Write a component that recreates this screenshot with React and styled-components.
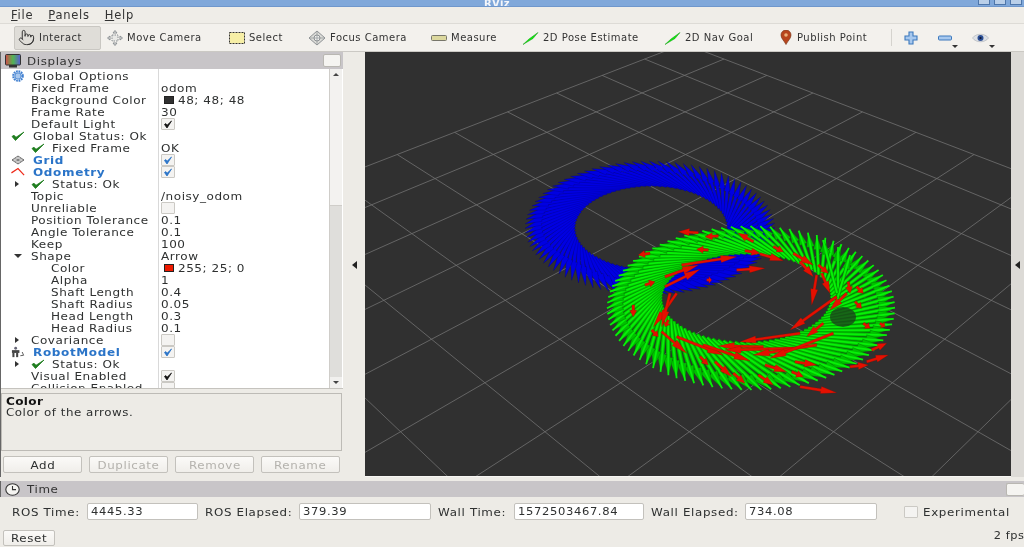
import React from 'react';
import styled, { createGlobalStyle } from 'styled-components';
import { Pointer } from 'lucide-react';

const Global = createGlobalStyle`
  html, body { margin: 0; padding: 0; background: #edebe6; overflow: hidden; }
  * { box-sizing: border-box; }
`;

const Page = styled.div`
  width: 1024px; height: 547px; overflow: hidden; display: flex; flex-direction: column;
  background: #edebe6; color: #2e3030;
  font-family: "DejaVu Sans", sans-serif; font-size: 11px; letter-spacing: .42px;
  filter: blur(.3px);
`;
const Wide = styled.span`
  display: inline-block; white-space: nowrap; transform: scaleX(${p => p.$s ?? 1.13});
  transform-origin: ${p => p.$o ?? 'left'} center;
`;
const TitleBar = styled.div`
  height: 7px; flex: none; display: flex; justify-content: center; align-items: flex-end; overflow: hidden;
  background: #80a8da; border-bottom: 1px solid #6f97cc; position: relative; color: #f4f6fa; padding-right: 30px;
  font-size: 10px; font-weight: bold; line-height: 10px;
`;
const TitleText = styled.span` margin-bottom: -3px; `;
const WinButtons = styled.div`
  position: absolute; right: 2px; top: 0; display: flex; gap: 4px;
`;
const WinButton = styled.div`
  width: 12px; height: 5px; background: #b9cfe9; border: 1px solid #4e76aa; border-top: 0;
`;
const MenuBar = styled.div`
  height: 16px; flex: none; display: flex; align-items: center; gap: 15px; padding-left: 11px;
  background: #efede8; font-size: 11.5px; letter-spacing: .75px; color: #333;
  u { text-underline-offset: 1px; }
`;
const Toolbar = styled.div`
  height: 29px; flex: none; display: flex; align-items: center; padding-left: 5px;
  background: #f3f1ed; border-top: 1px solid #dddbd6; border-bottom: 1px solid #cbc9c4;
`;
const Grip = styled.div`
  width: 4px; height: 17px; margin-right: 5px;
  background-image: radial-gradient(#bdbbb6 .6px, transparent .7px); background-size: 2px 2px;
`;
const ToolButton = styled.div`
  width: ${p => p.$w}px; height: 24px; flex: none; margin-right: ${p => p.$gap ?? 0}px;
  display: flex; align-items: center; gap: ${p => p.$iconGap ?? 4}px; padding-left: ${p => p.$pad ?? 4}px; white-space: nowrap;
  font-size: 10px; letter-spacing: .5px; color: #333;
  border-radius: 2px;
  ${p => p.$active && 'background: #dfddd8; border: 1px solid #c9c7c2;'}
`;
const ToolSep = styled.div` width: 1px; height: 17px; background: #d5d3ce; margin-right: 8px; `;
const Caret = styled.span`
  width: 0; height: 0; border-left: 3px solid transparent; border-right: 3px solid transparent;
  border-top: 3px solid #333; align-self: flex-end; margin-bottom: 2px; margin-left: -2px;
`;
const Main = styled.div`
  height: 425px; flex: none; display: flex; border-left: 1px solid #666;
`;
const Dock = styled.div`
  width: 342px; flex: none; display: flex; flex-direction: column;
`;
const DockHeader = styled.div`
  height: 17px; flex: none; display: flex; align-items: center; gap: 6px; padding-left: 4px;
  background: #c8c5c8; font-size: 10.5px; color: #333; letter-spacing: .55px;
`;
const HeadTitle = styled(Wide)` flex: none; `;
const FloatButton = styled.div`
  width: 18px; height: 13px; margin-left: auto; margin-right: 2px; background: #f5f4f1;
  border: 1px solid #b9b7b2; border-radius: 2px;
  ${p => p.$flush && 'margin-right: 0; border-right: 0;'}
`;
const TreeFrame = styled.div`
  height: 320px; flex: none; display: flex; background: #fff; border-bottom: 1px solid #c5c3be; overflow: hidden;
`;
const Tree = styled.div`
  flex: 1; overflow: hidden; padding-top: 1px;
  background: linear-gradient(90deg, transparent 157px, #d9d9d9 157px, #d9d9d9 158px, transparent 158px);
`;
const Row = styled.div`
  height: 12px; display: grid; grid-template-columns: 158px 1fr; line-height: 12px; white-space: nowrap;
`;
const Label = styled.div`
  display: flex; align-items: center; padding-left: 10px; height: 12px;
  font-size: 10.5px; letter-spacing: .47px;
  ${p => p.$blue && 'color: #2a74c8; font-weight: bold; letter-spacing: .55px;'}
`;
const CaretSlot = styled.span`
  width: 20px; flex: none; display: flex; align-items: center; padding-left: ${p => p.$down ? 3 : 4}px;
`;
const CaretRight = styled.span`
  width: 0; height: 0; border-top: 3.5px solid transparent; border-bottom: 3.5px solid transparent; border-left: 4px solid #333;
`;
const CaretDown = styled.span`
  width: 0; height: 0; border-left: 4px solid transparent; border-right: 4px solid transparent; border-top: 4px solid #333;
`;
const IconSlot = styled.span`
  width: 14px; flex: none; margin-right: ${p => p.$gap}px; display: flex; align-items: center; justify-content: center; height: 12px;
`;
const Deep = styled.span` width: 20px; flex: none; `;
const Value = styled.div`
  display: flex; align-items: center; gap: 4px; padding-left: 2px; font-size: 10.5px; letter-spacing: .47px; height: 12px;
`;
const Swatch = styled.span`
  width: 10px; height: 8px; margin-left: 3px; flex: none; background: ${p => p.$c}; border: 1px solid #222;
`;
const Check = styled.span`
  width: 14px; height: 12px; flex: none; display: flex; align-items: center; justify-content: center;
  background: #f4f3f1; border: 1px solid #cbc9c4; border-radius: 1px;
`;
const ScrollBar = styled.div`
  width: 13px; flex: none; margin-right: 1px; display: flex; flex-direction: column; background: #dfdedb; border-left: 1px solid #cfcdc9;
`;
const ScrollEnd = styled.div`
  height: 11px; flex: none; background: #f1f0ee; display: flex; align-items: center; justify-content: center;
`;
const ScrollThumb = styled.div` height: 126px; flex: none; background: #f3f2f0; border-bottom: 1px solid #cfcdc9; `;
const ScrollTrack = styled.div` flex: 1; `;
const UpTri = styled.span`
  width: 0; height: 0; border-left: 3.5px solid transparent; border-right: 3.5px solid transparent; border-bottom: 3px solid #444;
`;
const DownTri = styled.span`
  width: 0; height: 0; border-left: 3.5px solid transparent; border-right: 3.5px solid transparent; border-top: 3px solid #444;
`;
const Help = styled.div`
  height: 58px; margin-top: 4px; margin-right: 1px; flex: none; padding: 2px 4px; border: 1px solid #bdbbb6; background: #edebe6;
  font-size: 10.5px; line-height: 11px; letter-spacing: .47px; color: #2e3030;
`;
const HelpLine = styled.div` height: 11px; `;
const HelpTitle = styled(HelpLine)` font-weight: bold; letter-spacing: .3px; color: #111; `;
const ButtonRow = styled.div`
  display: flex; gap: 7px; padding: 5px 0 0 2px;
`;
const Btn = styled.div`
  width: ${p => p.$w}px; height: ${p => p.$h ?? 17}px; flex: none; display: flex; align-items: center; justify-content: center;
  background: linear-gradient(#fbfaf8, #f0eeea); border: 1px solid #c3c1bc; border-radius: 2px; font-size: 10.5px; letter-spacing: .55px;
  color: ${p => p.$off ? '#b4b2ad' : '#2e3030'};
`;
const Splitter = styled.div`
  width: ${p => p.$w}px; flex: none; display: flex; align-items: center; padding-left: ${p => p.$pad}px; background: ${p => p.$bg};
`;
const LeftTri = styled.span`
  width: 0; height: 0; border-top: 4px solid transparent; border-bottom: 4px solid transparent; border-right: 5px solid #222;
`;
const View = styled.div`
  flex: 1; height: 425px; background: #303030; overflow: hidden; border-bottom: 1px solid #f7f6f3;
  svg { display: block; width: 646px; height: 424px; }
`;
const TimeHead = styled(DockHeader)`
  height: 16px; margin-top: 4px; border-left: 1px solid #666; padding-left: 4px; gap: 7px;
`;
const TimeRow = styled.div`
  height: 17px; margin-top: 6px; flex: none; display: flex; align-items: center; padding-left: 12px;
`;
const TimeLabel = styled.span`
  width: ${p => p.$w}px; flex: none; font-size: 10.5px; letter-spacing: .58px; white-space: nowrap;
`;
const TimeInput = styled.div`
  width: ${p => p.$w}px; height: 17px; flex: none; margin-right: 7px; padding-left: 3px; background: #fff;
  border: 1px solid #c3c1bc; border-radius: 2px; font-size: 10.5px; letter-spacing: .58px; line-height: 14px;
`;
const Box = styled.span`
  width: 14px; height: 12px; flex: none; margin: 0 5px 0 20px; background: #f4f3f1; border: 1px solid #cbc9c4; border-radius: 1px;
`;
const Bottom = styled.div`
  flex: 1; margin-top: 10px; display: flex; align-items: flex-start; justify-content: space-between; padding-left: 3px;
  font-size: 10.5px; letter-spacing: .5px;
`;
const Fps = styled.span` margin-top: -1px; margin-right: 0; `;

/* ---- icons ---- */
const I = ({ w = 16, h = 16, children, vb }) => (
  <svg width={w} height={h} viewBox={vb || `0 0 ${w} ${h}`} fill="none">{children}</svg>
);
const MoveIcon = () => (
  <I><g stroke="#8a8f93" strokeWidth="1" fill="#e9e9e6">
    <rect x="5" y="5" width="6" height="6" strokeDasharray="1.5 1" />
    <path d="M8 0.5l2 2.5H6zM8 15.5l2-2.5H6zM0.5 8L3 6v4zM15.5 8L13 6v4z" />
  </g></I>
);
const SelectIcon = () => (
  <I w={16} h={12}><rect x=".5" y=".5" width="15" height="11" fill="#f7efa6" stroke="#333" strokeDasharray="2 1" /></I>
);
const FocusIcon = () => (
  <I w={18} h={16}><g stroke="#8e9295" fill="#dcdcd8"><path d="M9 1l8 7-8 7-8-7z" /><circle cx="9" cy="8" r="3" fill="#f0f0ee" /><path d="M9 2v12M2 8h14" strokeWidth=".7" /></g></I>
);
const MeasureIcon = () => (
  <I w={16} h={8}><rect x=".5" y="1.5" width="15" height="5" rx="1" fill="#dcd89e" stroke="#77766a" /></I>
);
const GreenArrowIcon = () => (
  <I w={16} h={14}><path d="M0 13.5L6 8l9-6.5-5 6z" fill="#10e810" stroke="#0a9a0a" strokeWidth=".5" /></I>
);
const PinIcon = () => (
  <I w={12} h={15}><path d="M6 14.5C4 10.5 1 8.5 1 5a5 5 0 0110 0c0 3.5-3 5.5-5 9.5z" fill="#b8451c" stroke="#7d3a1c" strokeWidth=".7" /><circle cx="6" cy="5" r="1.8" fill="#e9b27a" /></I>
);
const PlusIcon = () => (
  <I w={14} h={14}><path d="M5 1h4v4h4v4H9v4H5V9H1V5h4z" fill="#a7c8ee" stroke="#3d79bd" strokeWidth="1.1" /></I>
);
const MinusIcon = () => (
  <I w={14} h={6}><rect x=".5" y="1" width="13" height="4" rx="1" fill="#a7c8ee" stroke="#3d79bd" strokeWidth="1" /></I>
);
const EyeIcon = () => (
  <I w={17} h={12}><path d="M.5 6C4 1 13 1 16.5 6 13 11 4 11 .5 6z" fill="#dde1e6" stroke="#b2b6bb" strokeWidth=".7" /><circle cx="8.5" cy="6" r="3" fill="#2c4f95" /><circle cx="8.5" cy="6" r="1.1" fill="#0c1630" /></I>
);
const MonitorIcon = () => (
  <I w={16} h={14}>
    <defs><linearGradient id="scr" x1="0" y1="0" x2="1" y2="0"><stop offset="0" stopColor="#d24a4a" /><stop offset=".5" stopColor="#52b552" /><stop offset="1" stopColor="#5a5ad6" /></linearGradient></defs>
    <rect x=".5" y=".5" width="15" height="10.5" rx="1" fill="url(#scr)" stroke="#333" /><rect x="4" y="11" width="8" height="2.5" fill="#333" />
  </I>
);
const GearIcon = () => (
  <I w={14} h={12}><circle cx="7" cy="6" r="4.6" stroke="#3f7fd0" strokeWidth="2.4" strokeDasharray="1.7 .7" /><circle cx="7" cy="6" r="3" fill="#a9c8ee" stroke="#3f7fd0" strokeWidth=".7" /></I>
);
const OkIcon = () => (
  <I w={14} h={12}><path d="M1 6.5L4.5 10.5 13 2 5 7.3 3 5.2z" fill="#1f7d1f" stroke="#1f7d1f" strokeWidth=".8" strokeLinejoin="round" /></I>
);
const GridIcon = () => (
  <I w={14} h={10}><g stroke="#555" strokeWidth=".8" fill="#eee"><path d="M7 1l6 4-6 4-6-4z" /><path d="M4 3l6 4M10 3L4 7M7 1v8M1 5h12" strokeWidth=".5" /></g></I>
);
const OdomIcon = () => (
  <I w={16} h={10}><path d="M.5 6L8 1l7 7.5" stroke="#ee2a1a" strokeWidth="1.4" /></I>
);
const RobotIcon = () => (
  <I w={15} h={12}><g fill="#444"><circle cx="5" cy="2" r="1.5" fill="#667" /><rect x="1" y="4" width="8" height="3" /><rect x="1.5" y="7" width="2.2" height="4.5" /><rect x="5.5" y="7" width="2.2" height="4.5" /></g><path d="M10 10l3.5-.5L12 6" stroke="#555" /></I>
);
const ClockIcon = () => (
  <I w={15} h={13}><ellipse cx="7.5" cy="6.5" rx="6.7" ry="5.8" fill="#f5f4f1" stroke="#333" strokeWidth="1.1" /><path d="M7.5 3v3.6H11" stroke="#333" strokeWidth="1.1" /></I>
);
const TickIcon = ({ c }) => (
  <I w={10} h={9}><path d="M1.5 4.5L4 8 8.5 1 4 5.3 2.8 3.6z" fill={c} stroke={c} strokeWidth=".8" strokeLinejoin="round" /></I>
);

/* ---- scene ---- */
function project(c, r) {
  const s = 0.002188 - 0.0000756 * r;
  const y = 1 / s - 398;
  const w = 0.174 / s;
  return [685 + 0.0133 * (y - 110) + (c * w) / 2, y];
}
const gridLines = [];
for (let k = -1; k <= 19; k += 2) {
  for (let t = 0; t < 2; t++) {
    const a = t ? project((k + 1) / 2, (k - 1) / 2) : project((-1 - k) / 2, (k - 1) / 2);
    const b = t ? project((k - 19) / 2, (k + 19) / 2) : project((19 - k) / 2, (k + 19) / 2);
    gridLines.push(`M${a[0].toFixed(1)} ${a[1].toFixed(1)}L${b[0].toFixed(1)} ${b[1].toFixed(1)}`);
  }
}

function arrow(x1, y1, x2, y2, sw, hw, hl) {
  const dx = x2 - x1, dy = y2 - y1, len = Math.hypot(dx, dy) || 1;
  const ux = dx / len, uy = dy / len, nx = -uy, ny = ux;
  const bx = x2 - ux * hl, by = y2 - uy * hl;
  const p = [
    [x1 + nx * sw, y1 + ny * sw], [bx + nx * sw, by + ny * sw], [bx + nx * hw, by + ny * hw], [x2, y2],
    [bx - nx * hw, by - ny * hw], [bx - nx * sw, by - ny * sw], [x1 - nx * sw, y1 - ny * sw],
  ];
  return 'M' + p.map(q => q[0].toFixed(1) + ' ' + q[1].toFixed(1)).join('L') + 'Z';
}
function ring({ n, ic, oc, delta }) {
  const out = [];
  for (let i = 0; i < n; i++) {
    const t = (i / n) * Math.PI * 2;
    const x1 = ic[0] + ic[2] * Math.cos(t), y1 = ic[1] + ic[3] * Math.sin(t);
    const x2 = oc[0] + oc[2] * Math.cos(t - delta), y2 = oc[1] + oc[3] * Math.sin(t - delta);
    out.push([x1, y1, x2, y2]);
  }
  return out;
}
const blue = ring({ n: 92, ic: [651, 228, 77, 43], oc: [650, 228, 125, 67], delta: 0.62 }).map(a => {
  const s = (a[3] + 398) / 630;
  return arrow(a[0], a[1], a[2], a[3], 1.7 * s, 3.2 * s, 17 * s);
});
const green = ring({ n: 92, ic: [746, 298, 85, 45], oc: [751, 308, 144, 82], delta: 0.55 }).map(a => {
  const s = (a[3] + 398) / 700;
  return [arrow(a[0], a[1], a[2], a[3], 2 * s, 4.4 * s, 16 * s), a];
});
[[838, 297, 838, 247], [837, 300, 850, 255], [837, 293, 823, 240]].forEach(a => {
  green.push([arrow(a[0], a[1], a[2], a[3], 1.6, 3.8, 14), a]);
});
const redZ = [
  [325,8,265,5],[385,18,345,20],[490,35,445,10],[355,60,320,58],[180,70,145,75],[465,62,510,70],[510,72,580,92],[550,50,580,65],
  [610,70,670,105],[685,105,715,130],[630,95,670,140],[680,135,665,225],[695,130,720,190],
  [275,105,440,80],[225,140,325,105],[225,170,330,118],[440,120,525,115],[350,150,365,150],[165,165,195,155],
  [260,190,190,290],[240,190,215,290],[235,270,225,290],[130,225,130,260],[185,300,205,320],[215,305,290,370],[260,320,400,375],[340,345,480,392],
  [630,310,450,335],[520,350,385,348],[610,355,405,360],[680,345,490,375],[730,310,540,385],[740,200,600,300],[700,280,650,320],[770,190,720,240],
  [330,380,355,405],[375,395,425,440],[430,430,465,460],[505,435,550,465],[525,405,590,425],[605,425,640,440],[615,395,680,405],[630,470,740,488],
  [780,410,835,405],[830,395,895,375],[845,360,890,340],[775,155,780,190],[800,170,820,190],[795,215,815,235],[820,280,840,295],[870,280,885,290],
];
const red = redZ.map(([a, b, c, d]) => {
  const x1 = 590 + a / 3, y1 = 230 + b / 3, x2 = 590 + c / 3, y2 = 230 + d / 3;
  const len = Math.hypot(x2 - x1, y2 - y1);
  const hl = Math.min(len * 0.55, 16);
  return arrow(x1, y1, x2, y2, 1.3, 3.6, hl);
});

const Scene = () => (
  <svg viewBox="365 52 646 424">
    <path d={gridLines.join('')} stroke="#717171" strokeWidth=".8" fill="none" />
    {blue.map((d, i) => <path key={i} d={d} fill="#0000e2" stroke="#00007a" strokeWidth=".3" />)}
    {green.map(([d, a], i) => (
      <g key={i}>
        <path d={d} fill="#00c000" stroke="#005a00" strokeWidth=".3" />
        <path d={`M${a[0]} ${a[1]}L${a[2]} ${a[3]}`} stroke="#08f008" strokeWidth="1.8" />
      </g>
    ))}
    {red.map((d, i) => <path key={i} d={d} fill="#e41000" stroke="#8a0a00" strokeWidth=".25" />)}
    <ellipse cx="843" cy="317" rx="13" ry="10" fill="#1c3a1c" opacity=".75" />
  </svg>
);

/* ---- data ---- */
const rows = [
  { t: 'Global Options', top: 1, icon: <GearIcon /> },
  { t: 'Fixed Frame', v: 'odom' },
  { t: 'Background Color', v: '48; 48; 48', sw: '#303030' },
  { t: 'Frame Rate', v: '30' },
  { t: 'Default Light', ck: '#111' },
  { t: 'Global Status: Ok', top: 1, icon: <OkIcon /> },
  { t: 'Fixed Frame', icon: <OkIcon />, v: 'OK' },
  { t: 'Grid', top: 1, blue: 1, icon: <GridIcon />, ck: '#2a74c8' },
  { t: 'Odometry', top: 1, blue: 1, icon: <OdomIcon />, ck: '#2a74c8' },
  { t: 'Status: Ok', caret: 'r', icon: <OkIcon /> },
  { t: 'Topic', v: '/noisy_odom' },
  { t: 'Unreliable', ck: 'none' },
  { t: 'Position Tolerance', v: '0.1' },
  { t: 'Angle Tolerance', v: '0.1' },
  { t: 'Keep', v: '100' },
  { t: 'Shape', caret: 'd', v: 'Arrow' },
  { t: 'Color', deep: 1, v: '255; 25; 0', sw: '#ee1a00' },
  { t: 'Alpha', deep: 1, v: '1' },
  { t: 'Shaft Length', deep: 1, v: '0.4' },
  { t: 'Shaft Radius', deep: 1, v: '0.05' },
  { t: 'Head Length', deep: 1, v: '0.3' },
  { t: 'Head Radius', deep: 1, v: '0.1' },
  { t: 'Covariance', caret: 'r', ck: 'none' },
  { t: 'RobotModel', top: 1, blue: 1, icon: <RobotIcon />, ck: '#2a74c8' },
  { t: 'Status: Ok', caret: 'r', icon: <OkIcon /> },
  { t: 'Visual Enabled', ck: '#111' },
  { t: 'Collision Enabled', ck: 'none' },
];

const TreeRow = ({ r }) => (
  <Row>
    <Label $blue={r.blue}>
      {!r.top && (
        <CaretSlot $down={r.caret === 'd'}>
          {r.caret === 'r' && <CaretRight />}
          {r.caret === 'd' && <CaretDown />}
        </CaretSlot>
      )}
      {r.deep && <Deep />}
      {r.icon && <IconSlot $gap={r.top ? 8 : 7}>{r.icon}</IconSlot>}
      <Wide $s={1.145}>{r.t}</Wide>
    </Label>
    <Value>
      {r.sw && <Swatch $c={r.sw} />}
      {r.ck && <Check>{r.ck !== 'none' && <TickIcon c={r.ck} />}</Check>}
      {r.v && <Wide $s={1.145}>{r.v}</Wide>}
    </Value>
  </Row>
);

export default function App() {
  return (
    <Page>
      <Global />
      <TitleBar>
        <TitleText>RViz</TitleText>
        <WinButtons><WinButton /><WinButton /><WinButton /></WinButtons>
      </TitleBar>
      <MenuBar>
        <span><u>F</u>ile</span><span><u>P</u>anels</span><span><u>H</u>elp</span>
      </MenuBar>
      <Toolbar>
        <Grip />
        <ToolButton $active $w={87} $gap={2} $pad={3} $iconGap={4}><Pointer size={17} strokeWidth={1.4} color="#333" />Interact</ToolButton>
        <ToolButton $w={105} $gap={17}><MoveIcon />Move Camera</ToolButton>
        <ToolButton $w={62} $gap={17}><SelectIcon />Select</ToolButton>
        <ToolButton $w={107} $gap={16}><FocusIcon />Focus Camera</ToolButton>
        <ToolButton $w={76} $gap={16}><MeasureIcon />Measure</ToolButton>
        <ToolButton $w={124} $gap={18}><GreenArrowIcon />2D Pose Estimate</ToolButton>
        <ToolButton $w={96} $gap={19}><GreenArrowIcon />2D Nav Goal</ToolButton>
        <ToolButton $w={96} $gap={19} $iconGap={5}><PinIcon />Publish Point</ToolButton>
        <ToolSep />
        <ToolButton $w={34}><PlusIcon /></ToolButton>
        <ToolButton $w={34} $iconGap={2}><MinusIcon /><Caret /></ToolButton>
        <ToolButton $w={34} $iconGap={2}><EyeIcon /><Caret /></ToolButton>
      </Toolbar>
      <Main>
        <Dock>
          <DockHeader><MonitorIcon /><HeadTitle>Displays</HeadTitle><FloatButton /></DockHeader>
          <TreeFrame>
            <Tree>{rows.map((r, i) => <TreeRow key={i} r={r} />)}</Tree>
            <ScrollBar>
              <ScrollEnd><UpTri /></ScrollEnd>
              <ScrollThumb />
              <ScrollTrack />
              <ScrollEnd><DownTri /></ScrollEnd>
            </ScrollBar>
          </TreeFrame>
          <Help>
            <HelpTitle><Wide $s={1.15}>Color</Wide></HelpTitle>
            <HelpLine><Wide>Color of the arrows.</Wide></HelpLine>
          </Help>
          <ButtonRow>
            <Btn $w={79}><Wide $o="center">Add</Wide></Btn>
            <Btn $w={79} $off><Wide $o="center">Duplicate</Wide></Btn>
            <Btn $w={79} $off><Wide $o="center">Remove</Wide></Btn>
            <Btn $w={79} $off><Wide $o="center">Rename</Wide></Btn>
          </ButtonRow>
        </Dock>
        <Splitter $w={22} $pad={9} $bg="#edebe6"><LeftTri /></Splitter>
        <View><Scene /></View>
        <Splitter $w={13} $pad={4} $bg="#dcdad6"><LeftTri /></Splitter>
      </Main>
      <TimeHead><ClockIcon /><HeadTitle>Time</HeadTitle><FloatButton $flush /></TimeHead>
      <TimeRow>
        <TimeLabel $w={75}><Wide>ROS Time:</Wide></TimeLabel><TimeInput $w={111}><Wide $s={1.1}>4445.33</Wide></TimeInput>
        <TimeLabel $w={94}><Wide>ROS Elapsed:</Wide></TimeLabel><TimeInput $w={132}><Wide $s={1.1}>379.39</Wide></TimeInput>
        <TimeLabel $w={76}><Wide>Wall Time:</Wide></TimeLabel><TimeInput $w={130}><Wide $s={1.1}>1572503467.84</Wide></TimeInput>
        <TimeLabel $w={94}><Wide>Wall Elapsed:</Wide></TimeLabel><TimeInput $w={132}><Wide $s={1.1}>734.08</Wide></TimeInput>
        <Box /><TimeLabel $w={90}><Wide>Experimental</Wide></TimeLabel>
      </TimeRow>
      <Bottom>
        <Btn $w={52} $h={16}><Wide $o="center">Reset</Wide></Btn>
        <Fps><Wide $s={1.08} $o="right">2 fps</Wide></Fps>
      </Bottom>
    </Page>
  );
}
